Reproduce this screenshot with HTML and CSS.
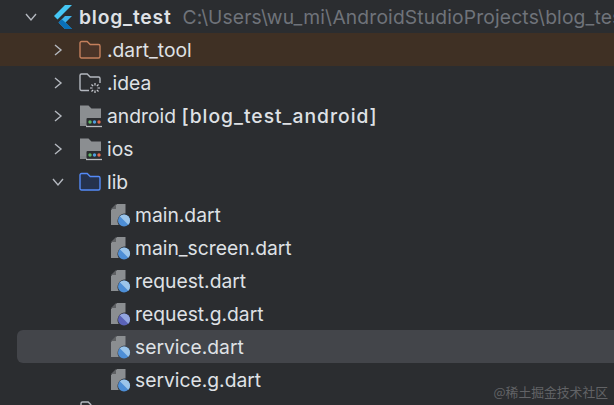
FILE: index.html
```html
<!DOCTYPE html>
<html lang="zh">
<head>
<meta charset="utf-8">
<title>Project tree</title>
<link rel="stylesheet" href="styles.css">
</head>
<body>
<svg class="defs" width="0" height="0" aria-hidden="true">
  <defs>
    <symbol id="right" viewBox="0 0 12 14"><path d="M3 2l6 5-6 5" fill="none" stroke="#b4b8bf" stroke-width="1.4"/></symbol>
    <symbol id="down" viewBox="0 0 14 12"><path d="M2 3l5 6 5-6" fill="none" stroke="#b4b8bf" stroke-width="1.4"/></symbol>
    <symbol id="module" viewBox="0 0 24 24">
      <path d="M1 1.500h8.500l3 3H22v15H1z" fill="#8b8e91"/>
      <path d="M1 19h7v3H1z" fill="#85888b"/>
      <rect x="7.500" y="14" width="16" height="7.500" rx="1" fill="#2b2d30"/>
      <circle cx="11" cy="18" r="1.700" fill="#5fb865"/>
      <circle cx="15.500" cy="18" r="1.700" fill="#4f9ee0"/>
      <circle cx="20" cy="18" r="1.700" fill="#e2694e"/>
      <path d="M7 22.500h16" stroke="#b9bcc0" stroke-width="1.300"/>
    </symbol>
    <symbol id="file" viewBox="0 0 22 24">
      <path d="M7 1h8.500v9.600a7.500 7.500 0 0 0-6.800 11.400H1V7z" fill="#8b8e91"/>
      <path d="M6 1v5H1z" fill="#5f6164"/>
      <circle cx="14" cy="17.500" r="6" fill="#4d8ed6"/>
      <path d="M9.800 13.200a6 6 0 0 1 8.500 8.500z" fill="#9cc5ea"/>
    </symbol>
    <symbol id="file-g" viewBox="0 0 22 24">
      <path d="M7 1h8.500v9.600a7.500 7.500 0 0 0-6.800 11.400H1V7z" fill="#8b8e91"/>
      <path d="M6 1v5H1z" fill="#5f6164"/>
      <circle cx="14" cy="17.500" r="6" fill="#5a62b8"/>
      <path d="M9.800 13.200a6 6 0 0 1 8.500 8.500z" fill="#93a6e0"/>
    </symbol>
  </defs>
</svg>
<main class="tree">
  <div class="row root">
    <svg class="chev" width="14" height="12"><use href="#down"/></svg>
    <svg class="ico-flutter" width="20" height="24" viewBox="0 0 20 24">
      <path d="M13 0h7L5.500 14.500 2 11z" fill="#45c7f5"/>
      <path d="M13 11h7l-6.500 6.500L20 24h-7l-6.500-6.500z" fill="#3fb3ea"/>
      <path d="M10 14.500l3.500 3L20 24h-7l-6.500-6.500z" fill="#0a70b8"/>
    </svg>
    <span class="bold">blog_test</span>
    <span class="path">C:\Users\wu_mi\AndroidStudioProjects\blog_test</span>
  </div>
  <div class="row lvl1 ignored">
    <svg class="chev" width="12" height="14"><use href="#right"/></svg>
    <svg class="ico folder" width="22" height="20" viewBox="0 0 22 20"><path d="M1 3a1.500 1.500 0 0 1 1.500-1.500h5.700l3 3H19.500A1.500 1.500 0 0 1 21 6v10.500a1.500 1.500 0 0 1-1.500 1.500h-17A1.500 1.500 0 0 1 1 16.500z" fill="#4a3428" stroke="#c47f5c" stroke-width="1.400"/></svg>
    <span>.dart_tool</span>
  </div>
  <div class="row lvl1">
    <svg class="chev" width="12" height="14"><use href="#right"/></svg>
    <svg class="ico folder" width="22" height="22" viewBox="0 0 22 22">
      <path d="M10 18.500H2.500A1.500 1.500 0 0 1 1 17V3.500A1.500 1.500 0 0 1 2.500 2h5.700l3 3H19.500A1.500 1.500 0 0 1 21 6.500V11" fill="none" stroke="#b4b8bf" stroke-width="1.400"/>
      <path d="M16 11v2.500M16 18.500v2.500M11 16h2.500M18.500 16h2.500M12.500 12.500l1.700 1.700M17.800 17.800l1.700 1.700M19.500 12.500l-1.700 1.700M14.200 17.800l-1.700 1.700" stroke="#ced0d6" stroke-width="1.200"/>
    </svg>
    <span>.idea</span>
  </div>
  <div class="row lvl1">
    <svg class="chev" width="12" height="14"><use href="#right"/></svg>
    <svg class="ico" width="24" height="24"><use href="#module"/></svg>
    <span>android <b class="semi">[blog_test_android]</b></span>
  </div>
  <div class="row lvl1">
    <svg class="chev" width="12" height="14"><use href="#right"/></svg>
    <svg class="ico" width="24" height="24"><use href="#module"/></svg>
    <span>ios</span>
  </div>
  <div class="row lvl1">
    <svg class="chev" width="14" height="12"><use href="#down"/></svg>
    <svg class="ico folder" width="22" height="20" viewBox="0 0 22 20"><path d="M1 3a1.500 1.500 0 0 1 1.500-1.500h5.700l3 3H19.500A1.500 1.500 0 0 1 21 6v10.500a1.500 1.500 0 0 1-1.500 1.500h-17A1.500 1.500 0 0 1 1 16.500z" fill="#25324d" stroke="#548af7" stroke-width="1.400"/></svg>
    <span>lib</span>
  </div>
  <div class="row lvl2"><svg class="ico" width="22" height="24"><use href="#file"/></svg><span>main.dart</span></div>
  <div class="row lvl2"><svg class="ico" width="22" height="24"><use href="#file"/></svg><span>main_screen.dart</span></div>
  <div class="row lvl2"><svg class="ico" width="22" height="24"><use href="#file"/></svg><span>request.dart</span></div>
  <div class="row lvl2"><svg class="ico" width="22" height="24"><use href="#file-g"/></svg><span>request.g.dart</span></div>
  <div class="row lvl2 selected"><svg class="ico" width="22" height="24"><use href="#file"/></svg><span>service.dart</span></div>
  <div class="row lvl2"><svg class="ico" width="22" height="24"><use href="#file"/></svg><span>service.g.dart</span></div>
  <div class="row lvl2 next">
    <svg class="ico-next" width="22" height="20" viewBox="0 0 22 20"><path d="M1 20V3.500A1.500 1.500 0 0 1 2.500 2h5.700l3 3" fill="none" stroke="#b4b8bf" stroke-width="1.400"/></svg>
  </div>
</main>
<div class="mark">@稀土掘金技术社区</div>
</body>
</html>
```
FILE: styles.css
```css
* { box-sizing: border-box; }
html, body { margin: 0; height: 100%; overflow: hidden; }
body {
  background: #2b2d30;
  color: #dfe1e5;
  font-family: Inter, "Noto Sans", sans-serif;
  font-size: 19.3px;
}
svg { flex: none; }
.defs { display: block; height: 0; }
.tree { display: flex; flex-direction: column; height: 405px; overflow: hidden; }
.row {
  display: flex;
  align-items: center;
  height: 33px;
  white-space: nowrap;
  flex: none;
}
.root { padding-left: 24px; }
.root .chev { margin-right: 14px; }
.ico-flutter { margin-right: 7px; }
.bold { font-weight: 600; letter-spacing: 0.8px; }
.semi { font-weight: 500; letter-spacing: 1px; }
.path { color: #6f737a; margin-left: 11px; letter-spacing: 0.14px; }
.lvl1 { padding-left: 51px; }
.lvl1 .chev { width: 14px; margin-right: 14px; }
.lvl1 .ico { margin-right: 4px; }
.lvl1 .ico.folder { margin-right: 6px; }
.lvl2 { padding-left: 110px; }
.lvl2 .ico { margin-right: 3px; }
.ignored { background: #3f3024; }
.selected {
  background: #43454a;
  margin-left: 17px;
  padding-left: 93px;
  border-radius: 6px 0 0 6px;
}
.next { padding-left: 80px; align-items: flex-start; padding-top: 4px; }
.mark {
  position: absolute;
  right: 6px;
  bottom: 4px;
  font-family: "Noto Sans CJK SC", sans-serif;
  font-size: 12.800px;
  color: #626366;
}
```
